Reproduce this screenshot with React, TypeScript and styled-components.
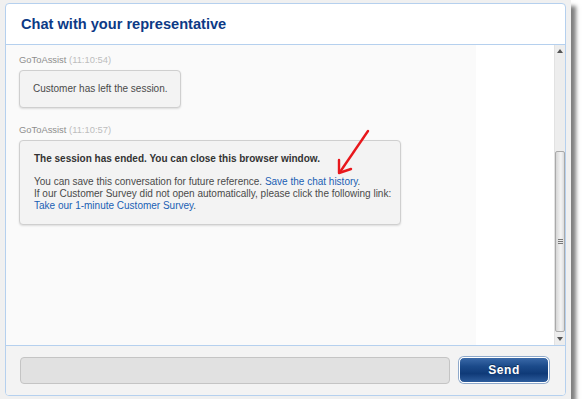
import React from 'react';
import styled, { createGlobalStyle } from 'styled-components';

const Global = createGlobalStyle`
  html, body { margin: 0; padding: 0; background: #ffffff; }
  body { font-family: "Liberation Sans", Arial, sans-serif; }
  * { box-sizing: border-box; }
`;

const Frame = styled.div`
  position: relative;
  width: 571px;
  height: 399px;
  padding: 3px 5px 3px 5px;
  background: #f0f0f0;
  box-shadow: 5px 6px 4px rgba(0, 0, 0, 0.5);
`;

const Window = styled.div`
  display: flex;
  flex-direction: column;
  height: 100%;
  border: 1px solid #b5d0ee;
  border-radius: 4px;
  background: #ffffff;
  overflow: hidden;
`;

const Header = styled.div`
  display: flex;
  align-items: center;
  height: 41px;
  padding-left: 15px;
  border-bottom: 1px solid #b5d0ee;
`;

const Title = styled.h1`
  margin: 0;
  font-size: 14.6px;
  font-weight: bold;
  color: #0c3a86;
`;

const ChatArea = styled.div`
  display: flex;
  height: 300px;
  background: #ffffff;
`;

const Messages = styled.div`
  width: 470px;
  padding: 10px 0 0 13px;
  background: #fafafa;
`;

const Spacer = styled.div`
  flex: 1;
`;

const Label = styled.div<{ $gap?: number }>`
  font-size: 9.4px;
  line-height: 10px;
  color: #8e8e8e;
  margin-top: ${(p) => p.$gap ?? 0}px;
  margin-bottom: 5px;
`;

const Time = styled.span`
  color: #bdbdbd;
`;

const Bubble = styled.div<{ $w: number; $pad: number }>`
  width: ${(p) => p.$w}px;
  padding: 12px ${(p) => p.$pad}px;
  background: #f3f3f3;
  border: 1px solid #cfcfcf;
  border-radius: 4px;
  box-shadow: 0 1px 2px rgba(0, 0, 0, 0.12);
  font-size: 10px;
  line-height: 12px;
  color: #4a4a4a;
  white-space: nowrap;
`;

const BubbleTitle = styled.div`
  font-weight: bold;
  color: #333333;
  margin-bottom: 11px;
`;

const Line = styled.div`
  white-space: nowrap;
`;

const Link = styled.a`
  color: #1a5fb4;
  text-decoration: none;
`;

const Scrollbar = styled.div`
  width: 11px;
  display: flex;
  flex-direction: column;
  align-items: center;
  background: #ededed;
  border-left: 1px solid #e2e2e2;
`;

const ScrollButton = styled.div<{ $h: number }>`
  height: ${(p) => p.$h}px;
  width: 100%;
  display: flex;
  align-items: center;
  justify-content: center;
`;

const Thumb = styled.div`
  margin-top: 94px;
  height: 181px;
  width: 10px;
  border: 1px solid #a9a9a9;
  border-radius: 2px;
  background: linear-gradient(to right, #d6d6d6, #f4f4f4 60%, #dcdcdc);
  display: flex;
  align-items: center;
  justify-content: center;
`;

const Grip = styled.div`
  width: 5px;
  height: 5px;
  background: repeating-linear-gradient(
    to bottom,
    #777 0px,
    #777 1px,
    transparent 1px,
    transparent 2px
  );
`;

const Footer = styled.div`
  flex: 1;
  display: flex;
  align-items: flex-start;
  gap: 9px;
  padding: 11px 15px 0 14px;
  border-top: 1px solid #b5d0ee;
  background: #f3f3f3;
`;

const Input = styled.div`
  width: 430px;
  height: 27px;
  background: #e1e1e1;
  border: 1px solid #c4c4c4;
  border-radius: 4px;
`;

const SendButton = styled.button`
  width: 90px;
  height: 26px;
  border: 1px solid #ffffff;
  border-radius: 5px;
  box-shadow: 0 0 0 1px #8ea9cb;
  background: linear-gradient(to bottom, #3a69a8 0%, #1b4a8a 35%, #0f3a78 65%, #2d5c9c 100%);
  color: #ffffff;
  font-family: "Liberation Sans", Arial, sans-serif;
  font-size: 12px;
  font-weight: bold;
  letter-spacing: 0.6px;
  text-shadow: 0 -1px 0 rgba(0, 0, 0, 0.4);
  padding: 0;
`;

const ArrowOverlay = styled.svg`
  position: absolute;
  left: 0;
  top: 0;
  pointer-events: none;
`;

const Tri = ({ up }: { up?: boolean }) => (
  <svg width="6" height="4" viewBox="0 0 6 4">
    <path d={up ? 'M0 4 L3 0 L6 4 Z' : 'M0 0 L3 4 L6 0 Z'} fill="#555" />
  </svg>
);

export default function App() {
  return (
    <>
      <Global />
      <Frame>
        <Window>
          <Header>
            <Title>Chat with your representative</Title>
          </Header>
          <ChatArea>
            <Messages>
              <Label>
                GoToAssist <Time>(11:10:54)</Time>
              </Label>
              <Bubble $w={162} $pad={13}>
                Customer has left the session.
              </Bubble>
              <Label $gap={17}>
                GoToAssist <Time>(11:10:57)</Time>
              </Label>
              <Bubble $w={382} $pad={14}>
                <BubbleTitle>The session has ended. You can close this browser window.</BubbleTitle>
                <Line>
                  You can save this conversation for future reference.{' '}
                  <Link href="#">Save the chat history</Link>.
                </Line>
                <Line>If our Customer Survey did not open automatically, please click the following link:</Line>
                <Line>
                  <Link href="#">Take our 1-minute Customer Survey</Link>.
                </Line>
              </Bubble>
            </Messages>
            <Spacer />
            <Scrollbar>
              <ScrollButton $h={12}>
                <Tri up />
              </ScrollButton>
              <Thumb>
                <Grip />
              </Thumb>
              <Spacer />
              <ScrollButton $h={13}>
                <Tri />
              </ScrollButton>
            </Scrollbar>
          </ChatArea>
          <Footer>
            <Input />
            <SendButton>Send</SendButton>
          </Footer>
        </Window>
        <ArrowOverlay width="571" height="399" viewBox="0 0 571 399">
          <g stroke="#e8171c" strokeWidth="2.4" fill="none" strokeLinecap="round" strokeLinejoin="round">
            <line x1="368" y1="131" x2="340" y2="172" />
            <polyline points="339,160 339,173 351,169" />
          </g>
        </ArrowOverlay>
      </Frame>
    </>
  );
}
